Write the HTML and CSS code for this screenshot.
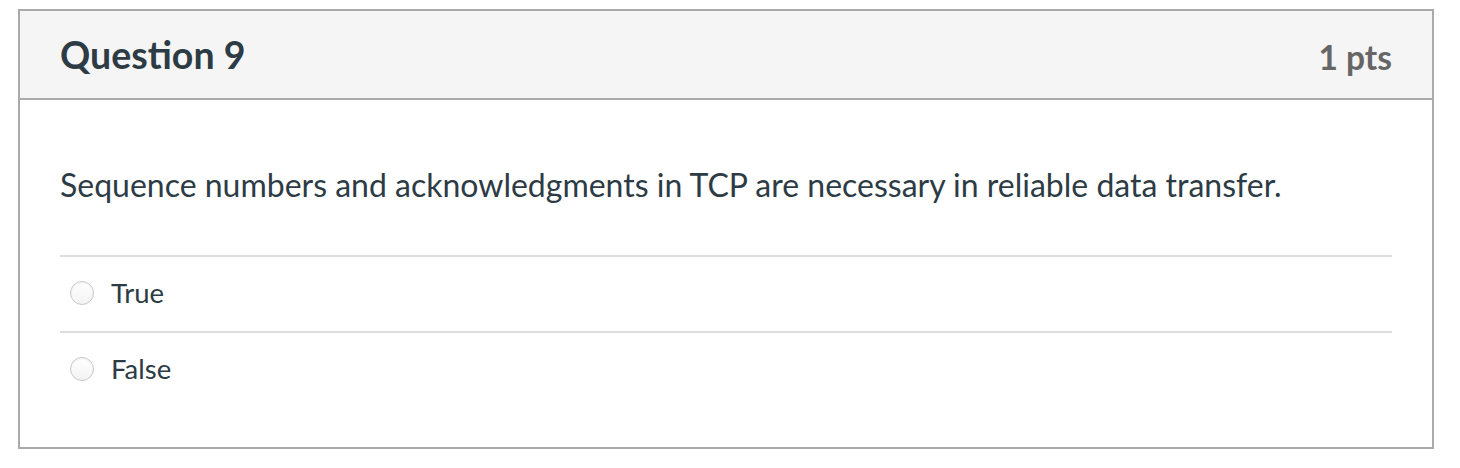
FILE: index.html
```html
<!DOCTYPE html>
<html>
<head>
<meta charset="utf-8">
<link rel="stylesheet" href="styles.css">
</head>
<body>
<div class="question">
  <div class="header">
    <h2 class="title">Question 9</h2>
    <span class="pts">1 pts</span>
  </div>
  <div class="content">
    <p class="text">Sequence numbers and acknowledgments in TCP are necessary in reliable data transfer.</p>
    <div class="answers">
      <label class="answer"><span class="radio"></span><span class="label">True</span></label>
      <label class="answer"><span class="radio"></span><span class="label">False</span></label>
    </div>
  </div>
</div>
</body>
</html>
```
FILE: styles.css
```css
html, body { margin: 0; padding: 0; background: #fff; }
body { font-family: Lato, "Open Sans", sans-serif; color: #2d3b45; }
.question {
  margin: 9px 0 0 18px;
  width: 1416px;
  box-sizing: border-box;
  border: 2px solid #aaa;
}
.header {
  background: #f5f5f5;
  border-bottom: 2px solid #aaa;
  height: 87px;
  display: flex;
  align-items: center;
  justify-content: space-between;
  padding: 0 40px;
}
.title { margin: 0; font-size: 37.5px; font-weight: 700; color: #2d3b45; }
.pts { font-size: 33.5px; font-weight: 700; color: #666; margin-top: 4px; }
.content { padding: 63px 40px 40px 40px; }
.text { margin: 0 0 48px 0; font-size: 32px; line-height: 44px; }
.answers { border-top: 2px solid #ddd; }
.answer {
  display: flex;
  align-items: center;
  height: 76px;
  border-bottom: 2px solid #ddd;
  padding-bottom: 3px;
  box-sizing: border-box;
}
.answer:last-child { border-bottom: none; height: 74px; }
.radio {
  width: 24px; height: 24px;
  margin-left: 10px; margin-right: 17px;
  border-radius: 50%;
  border: 1px solid #c8c8c8;
  background: linear-gradient(#fff, #f3f3f3);
  box-shadow: inset 0 1px 2px rgba(0,0,0,0.06);
  box-sizing: border-box;
}
.label { font-size: 27.5px; }
```
